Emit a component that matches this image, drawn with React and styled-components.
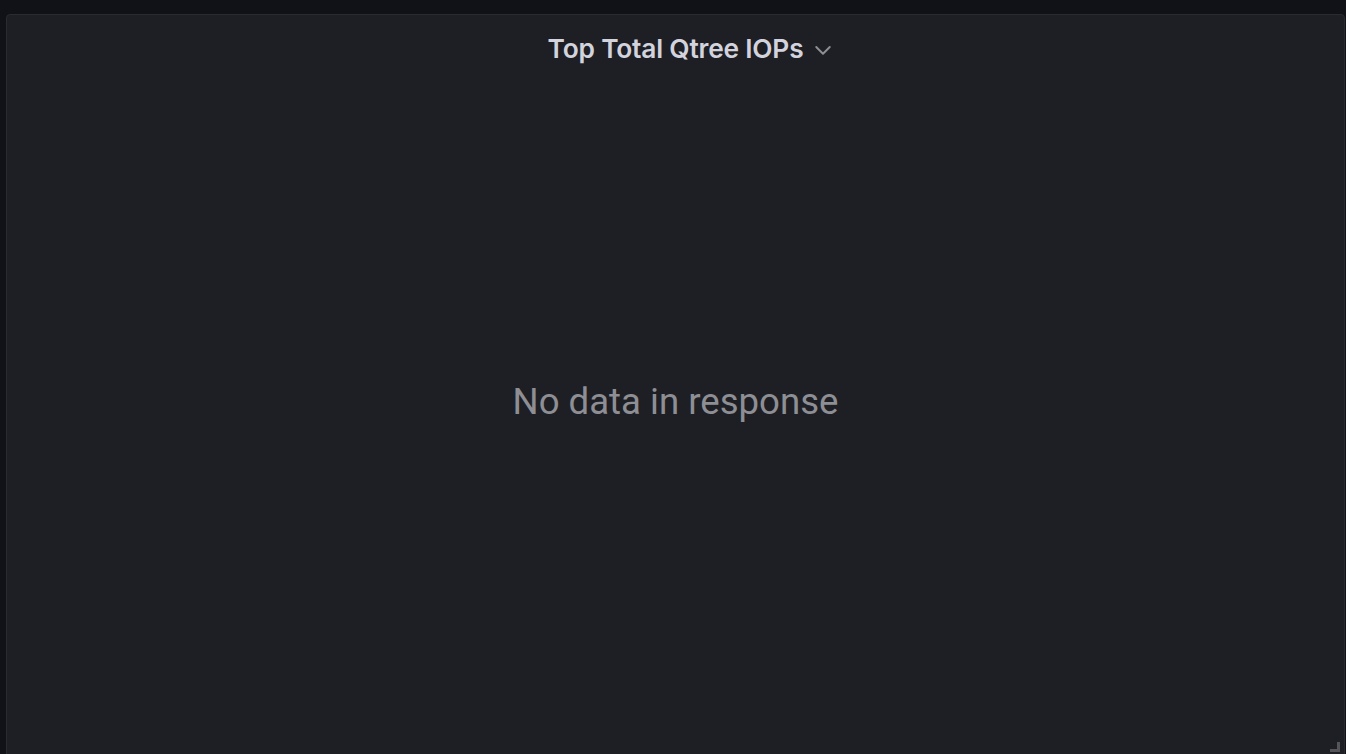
import React from "react";
import styled, { createGlobalStyle } from "styled-components";

const GlobalStyle = createGlobalStyle`
  html, body {
    margin: 0;
    padding: 0;
    background: #111217;
    overflow: hidden;
  }
`;

export default function App() {
  return (
    <>
      <GlobalStyle />
      <Page>
        <Panel>
          <Header>
            <Title>Top Total Qtree IOPs</Title>
            <Chevron viewBox="0 0 16 16">
              <path d="M3.5 6l4.5 4.5L12.5 6" />
            </Chevron>
          </Header>
          <Body>
            <NoData>No data in response</NoData>
          </Body>
          <ResizeHandle />
        </Panel>
      </Page>
    </>
  );
}

const Page = styled.div`
  box-sizing: border-box;
  height: 754px;
  padding: 14px 1px 0 6px;
`;

const Panel = styled.section`
  position: relative;
  box-sizing: border-box;
  display: flex;
  flex-direction: column;
  height: 760px;
  border: 1px solid #2a2b31;
  border-radius: 4px;
  background: #1e1f24;
`;

/* left padding balances the chevron so the title text itself is centred */
const Header = styled.header`
  display: flex;
  align-items: center;
  justify-content: center;
  gap: 8px;
  height: 66px;
  padding-left: 32px;
`;

const Title = styled.h2`
  margin: 0;
  color: #d3d3de;
  font-family: Inter, "Noto Sans", sans-serif;
  font-size: 26.3px;
  font-weight: 600;
  letter-spacing: -0.2px;
`;

const Chevron = styled.svg`
  width: 24px;
  height: 24px;
  fill: none;
  stroke: #8e8e95;
  stroke-width: 1.3;
  stroke-linecap: round;
  stroke-linejoin: round;
  margin-top: 3px;
`;

const Body = styled.div`
  flex: 1;
  display: flex;
  align-items: center;
  justify-content: center;
  padding-bottom: 52px;
`;

const NoData = styled.p`
  margin: 0;
  color: #8e8e95;
  font-family: Roboto, "Noto Sans", sans-serif;
  font-size: 36.6px;
`;

const ResizeHandle = styled.span`
  position: absolute;
  left: 1323px;
  top: 727px;
  width: 7px;
  height: 7px;
  border-right: 3px solid #555559;
  border-bottom: 3px solid #555559;
`;
